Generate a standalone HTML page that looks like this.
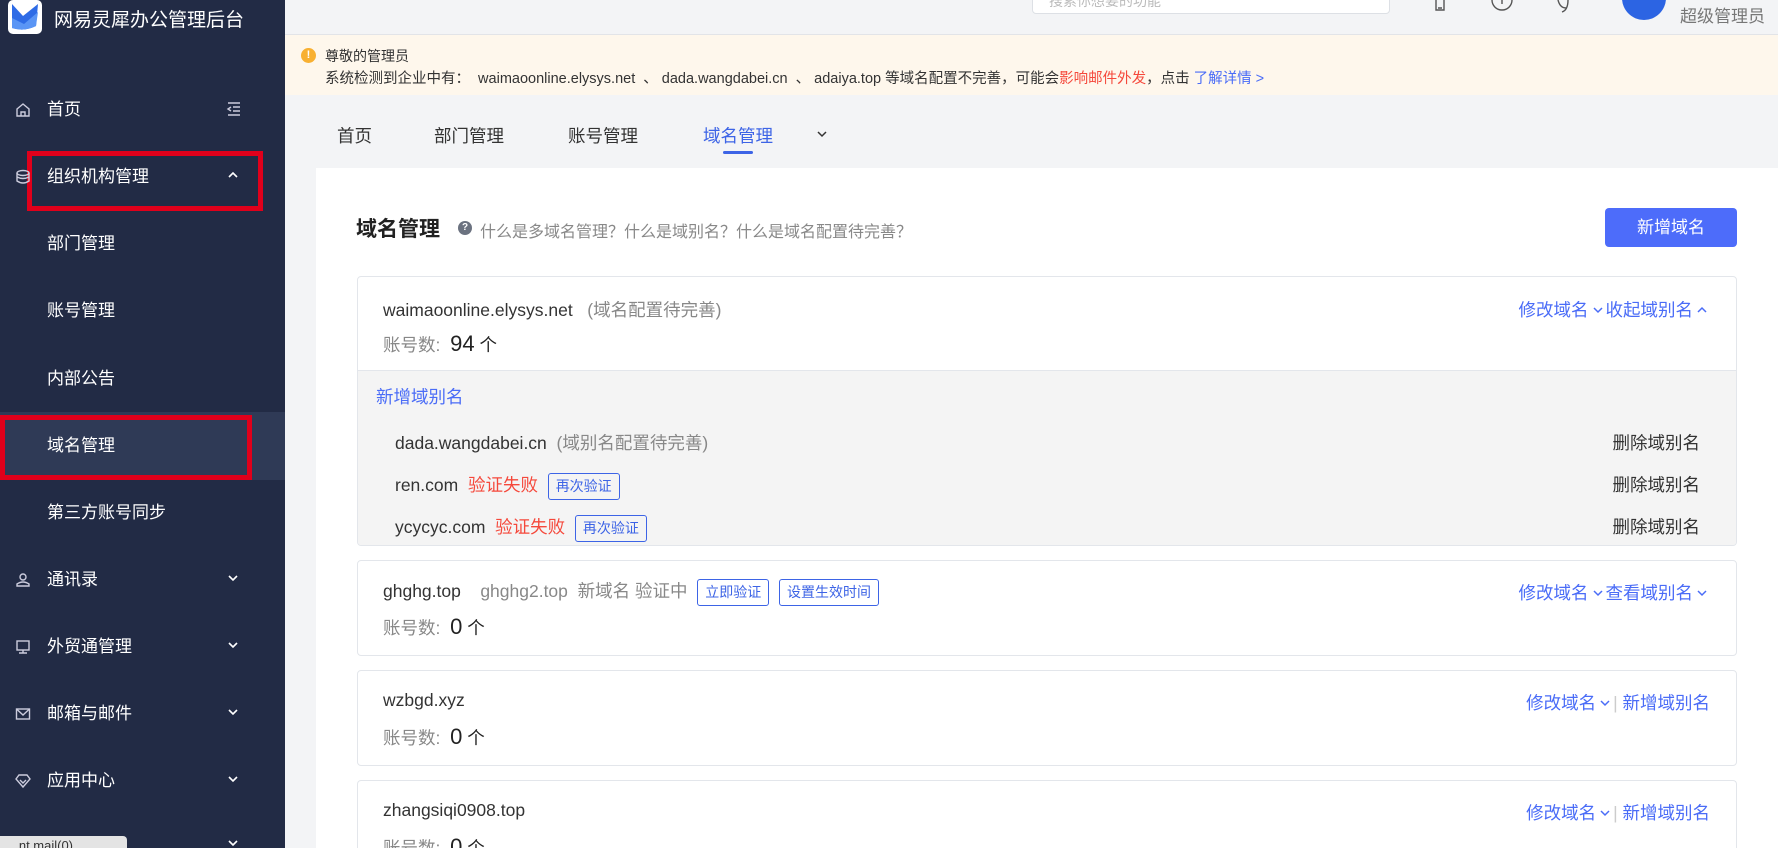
<!DOCTYPE html>
<html style="overflow:hidden;height:848px"><head><meta charset="utf-8"><style>
*{margin:0;padding:0;box-sizing:border-box}
body{width:1778px;height:848px;overflow:hidden;position:relative;background:#f3f4f6;font-family:"Liberation Sans","Noto Sans CJK SC",sans-serif;color:#333}
.a{position:absolute;white-space:nowrap}
.sb{position:absolute;left:0;top:0;width:285px;height:848px;background:#222b45}
.mi{position:absolute;left:47px;color:#fff;font-size:17px;line-height:20px}
.ic{position:absolute;left:15px;width:16px;height:16px}
.chev{position:absolute;left:228px;width:10px;height:10px}
.blue{color:#4a6cf7}
.card{position:absolute;left:357px;width:1380px;background:#fff;border:1px solid #e3e6eb;border-radius:4px;overflow:hidden}
.ob{display:inline-block;border:1px solid #3d64e6;color:#3d64e6;border-radius:3px;font-size:14px;padding:0 7px;line-height:25px;vertical-align:middle}
.gray{color:#888}
.dt{font-size:17.5px}
.cv{display:inline-block;width:10px;height:8px;margin:0 3px 2px 4px;vertical-align:middle}
</style></head><body>
<div class="sb">
 <svg class="a" style="left:8px;top:0" width="34" height="34" viewBox="0 0 34 34"><rect width="34" height="34" rx="5" fill="#fff"/><path d="M4 4 L15 16 L30 4 L28 26 Q16 32 4 28Z" fill="#2e6be6"/><path d="M4 18 L16 24 L30 12 L28 26 Q16 32 4 28Z" fill="#5a95f5"/></svg>
 <div class="a" style="left:54px;top:5px;color:#fff;font-size:19px">网易灵犀办公管理后台</div>
 <div class="a" style="left:0;top:412px;width:285px;height:68px;background:#2f3a56"></div>
 <div class="a" style="left:27px;top:151px;width:236px;height:60px;border:5px solid #e0001b"></div>
 <div class="a" style="left:0;top:415px;width:252px;height:65px;border:5px solid #e0001b"></div>

 <svg class="ic" style="top:102px" viewBox="0 0 16 16" fill="none" stroke="#ccd" stroke-width="1.4"><path d="M2 7 L8 2 L14 7 V14 H2Z M6 14 V10 H10 V14"/></svg>
 <div class="mi" style="top:100px">首页</div>
 <svg class="a" style="left:226px;top:102px" width="16" height="14" viewBox="0 0 16 14" fill="none" stroke="#ccd" stroke-width="1.4"><path d="M2 1H14 M7 5H14 M7 9H14 M2 13H14 M5 5 L2 7 L5 9"/></svg>

 <svg class="ic" style="top:169px" viewBox="0 0 16 16" fill="none" stroke="#ccd" stroke-width="1.4"><ellipse cx="8" cy="4" rx="6" ry="2.5"/><path d="M2 4V12 Q8 16 14 12 V4 M2 8 Q8 11 14 8"/></svg>
 <div class="mi" style="top:167px">组织机构管理</div>
 <svg class="chev" style="top:170px" viewBox="0 0 10 10" fill="none" stroke="#fff" stroke-width="1.6"><path d="M1 7 L5 3 L9 7"/></svg>

 <div class="mi" style="top:234px">部门管理</div>
 <div class="mi" style="top:301px">账号管理</div>
 <div class="mi" style="top:369px">内部公告</div>
 <div class="mi" style="top:436px">域名管理</div>
 <div class="mi" style="top:503px">第三方账号同步</div>

 <svg class="ic" style="top:572px" viewBox="0 0 16 16" fill="none" stroke="#ccd" stroke-width="1.4"><circle cx="8" cy="5" r="3"/><path d="M2 14 V12 Q8 8 14 12 V14Z"/></svg>
 <div class="mi" style="top:570px">通讯录</div>
 <svg class="chev" style="top:573px" viewBox="0 0 10 10" fill="none" stroke="#fff" stroke-width="1.6"><path d="M1 3 L5 7 L9 3"/></svg>

 <svg class="ic" style="top:639px" viewBox="0 0 16 16" fill="none" stroke="#ccd" stroke-width="1.4"><rect x="2" y="2" width="12" height="9"/><path d="M8 11V14 M4 14H12"/></svg>
 <div class="mi" style="top:637px">外贸通管理</div>
 <svg class="chev" style="top:640px" viewBox="0 0 10 10" fill="none" stroke="#fff" stroke-width="1.6"><path d="M1 3 L5 7 L9 3"/></svg>

 <svg class="ic" style="top:706px" viewBox="0 0 16 16" fill="none" stroke="#ccd" stroke-width="1.4"><rect x="1.5" y="3" width="13" height="10"/><path d="M1.5 3 L8 9 L14.5 3"/></svg>
 <div class="mi" style="top:704px">邮箱与邮件</div>
 <svg class="chev" style="top:707px" viewBox="0 0 10 10" fill="none" stroke="#fff" stroke-width="1.6"><path d="M1 3 L5 7 L9 3"/></svg>

 <svg class="ic" style="top:773px" viewBox="0 0 16 16" fill="none" stroke="#ccd" stroke-width="1.4"><path d="M1 6 L4 2 H12 L15 6 L8 14Z M5 7 L8 10 L11 7"/></svg>
 <div class="mi" style="top:771px">应用中心</div>
 <svg class="chev" style="top:774px" viewBox="0 0 10 10" fill="none" stroke="#fff" stroke-width="1.6"><path d="M1 3 L5 7 L9 3"/></svg>
 <svg class="chev" style="top:838px" viewBox="0 0 10 10" fill="none" stroke="#fff" stroke-width="1.6"><path d="M1 3 L5 7 L9 3"/></svg>
 <div class="a" style="left:0;top:836px;width:127px;height:12px;background:#e4e4e4;border-radius:0 4px 0 0;font-size:13px;color:#333;padding-left:8px;line-height:20px;overflow:hidden">...nt.mail(0)</div>
</div>

<!-- top bar -->
<div class="a" style="left:285px;top:34px;width:1493px;height:1px;background:#e2e4e8"></div>
<div class="a" style="left:1032px;top:-10px;width:358px;height:24px;background:#fff;border:1px solid #dde0e5;border-radius:4px;font-size:14px;color:#bbb;padding-left:16px;line-height:20px">搜索你想要的功能</div>
<svg class="a" style="left:1432px;top:0" width="16" height="12" viewBox="0 0 16 12" fill="none" stroke="#555" stroke-width="1.4"><path d="M4 0V10H12V0 M6 8H10"/></svg>
<svg class="a" style="left:1490px;top:0" width="24" height="14" viewBox="0 0 24 14" fill="none" stroke="#555" stroke-width="1.4"><path d="M2 0 A10 10 0 0 0 22 0 M12 0V4"/></svg>
<svg class="a" style="left:1556px;top:0" width="22" height="14" viewBox="0 0 22 14" fill="none" stroke="#555" stroke-width="1.4"><path d="M2 0 Q4 8 10 8 M12 0 Q12 10 6 12"/></svg>
<div class="a" style="left:1622px;top:-24px;width:44px;height:44px;border-radius:50%;background:#2c64e3"></div>
<div class="a" style="left:1680px;top:2px;font-size:17px;color:#777">超级管理员</div>

<!-- notice -->
<div class="a" style="left:285px;top:35px;width:1493px;height:60px;background:#fef7ec"></div>
<div class="a" style="left:301px;top:48px;width:15px;height:15px;border-radius:50%;background:#f8b031;color:#fff;font-size:11px;text-align:center;line-height:15px;font-weight:bold">!</div>
<div class="a" style="left:325px;top:46px;font-size:14px;color:#333">尊敬的管理员</div>
<div class="a" style="left:325px;top:67px;font-size:14.5px;color:#333">系统检测到企业中有：&nbsp; waimaoonline.elysys.net &nbsp;、 dada.wangdabei.cn &nbsp;、 adaiya.top 等域名配置不完善，可能会<span style="color:#f5483b">影响邮件外发</span>，点击 <span class="blue">了解详情 &gt;</span></div>

<!-- tabs -->
<div class="a" style="left:337px;top:123px;font-size:17.5px;color:#333">首页</div>
<div class="a" style="left:434px;top:123px;font-size:17.5px;color:#333">部门管理</div>
<div class="a" style="left:568px;top:123px;font-size:17.5px;color:#333">账号管理</div>
<div class="a" style="left:703px;top:123px;font-size:17.5px;color:#3d64e6">域名管理</div>
<div class="a" style="left:723px;top:151px;width:30px;height:3px;background:#3d64e6;border-radius:2px"></div>
<svg class="a" style="left:816px;top:129px" width="12" height="10" viewBox="0 0 12 10" fill="none" stroke="#333" stroke-width="1.5"><path d="M2 3 L6 7 L10 3"/></svg>

<!-- content -->
<div class="a" style="left:316px;top:168px;width:1462px;height:680px;background:#fff"></div>
<div class="a" style="left:356px;top:213px;font-size:21px;font-weight:bold;color:#222">域名管理</div>
<div class="a" style="left:458px;top:221px;width:14px;height:14px;border-radius:50%;background:#6b7280;color:#fff;font-size:10px;text-align:center;line-height:14px;font-weight:bold">?</div>
<div class="a" style="left:480px;top:218px;font-size:16px;color:#888">什么是多域名管理？什么是域别名？什么是域名配置待完善？</div>
<div class="a" style="left:1605px;top:208px;width:132px;height:39px;background:#4d6cfa;border-radius:4px;color:#fff;font-size:17px;text-align:center;line-height:39px">新增域名</div>

<div class="card" style="top:276px;height:270px">
 <div class="a dt" style="left:25px;top:20px;color:#333">waimaoonline.elysys.net &nbsp; <span class="gray">(域名配置待完善)</span></div>
 <div class="a dt" style="left:25px;top:54px;color:#888">账号数: &nbsp;<span style="font-size:22px;color:#222">94</span> <span style="color:#222">个</span></div>
 <div class="a dt blue" style="right:26px;top:20px">修改域名<svg class="cv" viewBox="0 0 10 8" fill="none" stroke="#4a6cf7" stroke-width="1.5"><path d="M1 2 L5 6 L9 2"/></svg>收起域别名<svg class="cv" viewBox="0 0 10 8" fill="none" stroke="#4a6cf7" stroke-width="1.5"><path d="M1 6 L5 2 L9 6"/></svg></div>
 <div class="a" style="left:0;top:93px;width:1380px;height:180px;background:#f4f4f4;border-top:1px solid #e3e6eb"></div>
 <div class="a blue dt" style="left:18px;top:107px">新增域别名</div>
 <div class="a dt" style="left:37px;top:153px">dada.wangdabei.cn &nbsp;<span class="gray">(域别名配置待完善)</span></div>
 <div class="a dt" style="left:37px;top:195px;line-height:26px">ren.com &nbsp;<span style="color:#f5483b">验证失败</span> &nbsp;<span class="ob">再次验证</span></div>
 <div class="a dt" style="left:37px;top:237px;line-height:26px">ycycyc.com &nbsp;<span style="color:#f5483b">验证失败</span> &nbsp;<span class="ob">再次验证</span></div>
 <div class="a dt" style="right:36px;top:153px">删除域别名</div>
 <div class="a dt" style="right:36px;top:195px">删除域别名</div>
 <div class="a dt" style="right:36px;top:237px">删除域别名</div>
</div>

<div class="card" style="top:560px;height:96px">
 <div class="a dt" style="left:25px;top:17px;line-height:26px">ghghg.top &nbsp;&nbsp; <span class="gray">ghghg2.top &nbsp;新域名 验证中</span> &nbsp;<span class="ob">立即验证</span> &nbsp;<span class="ob">设置生效时间</span></div>
 <div class="a dt" style="left:25px;top:53px;color:#888">账号数: &nbsp;<span style="font-size:22px;color:#222">0</span> <span style="color:#222">个</span></div>
 <div class="a dt blue" style="right:26px;top:19px">修改域名<svg class="cv" viewBox="0 0 10 8" fill="none" stroke="#4a6cf7" stroke-width="1.5"><path d="M1 2 L5 6 L9 2"/></svg>查看域别名<svg class="cv" viewBox="0 0 10 8" fill="none" stroke="#4a6cf7" stroke-width="1.5"><path d="M1 2 L5 6 L9 2"/></svg></div>
</div>

<div class="card" style="top:670px;height:96px">
 <div class="a dt" style="left:25px;top:19px">wzbgd.xyz</div>
 <div class="a dt" style="left:25px;top:53px;color:#888">账号数: &nbsp;<span style="font-size:22px;color:#222">0</span> <span style="color:#222">个</span></div>
 <div class="a dt blue" style="right:26px;top:19px">修改域名<svg class="cv" viewBox="0 0 10 8" fill="none" stroke="#4a6cf7" stroke-width="1.5"><path d="M1 2 L5 6 L9 2"/></svg><span style="color:#ccc">|</span> 新增域别名</div>
</div>

<div class="card" style="top:780px;height:68px;border-bottom:none;border-radius:4px 4px 0 0">
 <div class="a dt" style="left:25px;top:19px">zhangsiqi0908.top</div>
 <div class="a dt" style="left:25px;top:53px;color:#888">账号数: &nbsp;<span style="font-size:22px;color:#222">0</span> <span style="color:#222">个</span></div>
 <div class="a dt blue" style="right:26px;top:19px">修改域名<svg class="cv" viewBox="0 0 10 8" fill="none" stroke="#4a6cf7" stroke-width="1.5"><path d="M1 2 L5 6 L9 2"/></svg><span style="color:#ccc">|</span> 新增域别名</div>
</div>
</body></html>
